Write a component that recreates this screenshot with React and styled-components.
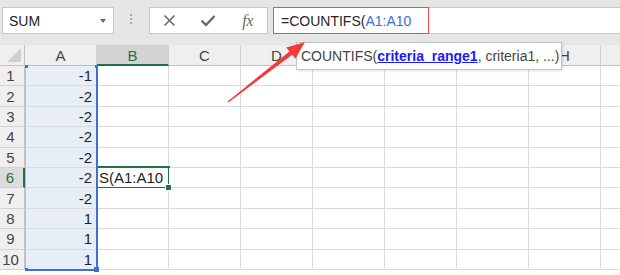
import React from 'react';
import styled, { createGlobalStyle } from 'styled-components';

const Global = createGlobalStyle`
  html, body { margin: 0; padding: 0; background: #fff; }
  body { font-family: "Liberation Sans", Arial, sans-serif; overflow: hidden; }
`;

const Page = styled.div`
  width: 620px;
  height: 275px;
  overflow: hidden;
  position: relative;
  background: #fff;
`;

const Toolbar = styled.div`
  height: 45px;
  box-sizing: border-box;
  background: #e6e6e6;
  display: flex;
  align-items: flex-start;
  padding-top: 7px;
`;

const NameBox = styled.div`
  margin-left: 2px;
  width: 112px;
  height: 27px;
  box-sizing: border-box;
  background: #fff;
  border: 1px solid #c6c6c6;
  display: flex;
  align-items: center;
  justify-content: space-between;
  padding: 0 7px 0 6px;
  font-size: 14px;
  color: #222;
`;

const Caret = styled.span`
  width: 0;
  height: 0;
  border-left: 3.5px solid transparent;
  border-right: 3.5px solid transparent;
  border-top: 4px solid #6a6a6a;
`;

const Grip = styled.div`
  width: 2px;
  margin: 7px 17px 0 16px;
  display: flex;
  flex-direction: column;
  gap: 2px;
`;

const GripDot = styled.span`
  width: 2px;
  height: 2px;
  background: #a8a8a8;
`;

const FnBox = styled.div`
  width: 119px;
  height: 27px;
  box-sizing: border-box;
  background: #fff;
  border: 1px solid #c6c6c6;
  display: grid;
  grid-template-columns: 38px 40px 39px;
  align-items: center;
  justify-items: center;
`;

const FxText = styled.span`
  font-family: "Liberation Serif", "Times New Roman", serif;
  font-style: italic;
  font-size: 16px;
  color: #6a6a6a;
  letter-spacing: -0.5px;
`;

const FormulaBar = styled.div`
  position: relative;
  flex: 1;
  margin-left: 5px;
  height: 27px;
  box-sizing: border-box;
  background: #fff;
  border: 1px solid #c6c6c6;
  border-right: none;
  display: flex;
  align-items: center;
  padding-left: 7px;
  font-size: 14px;
  color: #262626;
`;

const RefText = styled.span`
  color: ${p => p.$color};
`;

const RedBox = styled.div`
  position: absolute;
  left: -1px;
  top: -1px;
  width: 156px;
  height: 27px;
  box-sizing: border-box;
  border: 1.5px solid #ff4545;
`;

const Sheet = styled.div`
  position: relative;
  display: grid;
  grid-template-columns: 25px repeat(9, 72px);
  grid-template-rows: 21px repeat(10, 20.4px);
`;

const Cell = styled.div`
  position: relative;
  box-sizing: border-box;
  display: flex;
  align-items: center;
  white-space: nowrap;
  overflow: visible;
  font-size: 15px;
  color: #1e1e1e;
  background: ${p => (p.$sel ? '#e8eef8' : '#fff')};
  border-right: 1px solid #dadada;
  border-bottom: 1px solid #dadada;
  justify-content: ${p => (p.$right ? 'flex-end' : 'flex-start')};
  padding: ${p => (p.$right ? '0 4px 0 0' : '0 0 0 2px')};
  ${p =>
    p.$active &&
    `
    &::after {
      content: '';
      position: absolute;
      left: -1px; top: -2px; right: -2px; bottom: -2px;
      border: 2px solid #217346;
    }
    &::before {
      content: '';
      position: absolute;
      right: -4px; bottom: -4px;
      width: 5px; height: 5px;
      background: #217346;
      border: 1px solid #fff;
      z-index: 2;
    }
  `}
`;

const ColHead = styled.div`
  position: relative;
  box-sizing: border-box;
  display: flex;
  align-items: center;
  justify-content: center;
  font-size: 15px;
  padding-top: 1px;
  color: ${p => (p.$on ? '#217346' : '#444')};
  background: ${p => (p.$on ? '#d3d3d3' : '#efefef')};
  border-right: 1px solid #d0d0d0;
  border-bottom: ${p => (p.$on ? '2px solid #217346' : '1px solid #c3c3c3')};
`;

const RowHead = styled.div`
  box-sizing: border-box;
  display: flex;
  align-items: center;
  justify-content: center;
  padding-right: 3px;
  font-size: 15px;
  color: ${p => (p.$on ? '#217346' : '#444')};
  background: ${p => (p.$on ? '#dcdcdc' : '#efefef')};
  border-right: ${p => (p.$on ? '2px solid #217346' : '1px solid #c3c3c3')};
  border-bottom: 1px solid #d3d3d3;
`;

const Corner = styled.div`
  position: relative;
  box-sizing: border-box;
  background: #efefef;
  border-right: 1px solid #c3c3c3;
  border-bottom: 1px solid #c3c3c3;
  &::after {
    content: '';
    position: absolute;
    right: 3px;
    bottom: 3px;
    width: 0;
    height: 0;
    border-left: 14px solid transparent;
    border-bottom: 14px solid #cfcfcf;
  }
`;

const RangeBox = styled.div`
  position: absolute;
  left: 25px;
  top: 20px;
  width: 73px;
  height: 206px;
  box-sizing: border-box;
  border-left: 1px solid #a9bfe4;
  border-top: 1px solid #a9bfe4;
  border-right: 2px solid #3f72cf;
  border-bottom: 2px solid #3f72cf;
  pointer-events: none;
`;

const Handle = styled.span`
  position: absolute;
  width: ${p => p.$s}px;
  height: ${p => p.$s}px;
  background: #3f72cf;
  ${p => p.$pos}
`;

const Tooltip = styled.div`
  position: absolute;
  left: 296px;
  top: 42px;
  width: 266px;
  height: 28px;
  box-sizing: border-box;
  background: #fff;
  border: 1px solid #c4c4c4;
  box-shadow: 1px 1px 2px rgba(0, 0, 0, 0.12);
  display: flex;
  align-items: center;
  padding-left: 4px;
  font-size: 14px;
  color: #444;
  white-space: nowrap;
`;

const ArgLink = styled.span`
  color: #1a1aff;
  font-weight: bold;
  text-decoration: underline;
`;

const Arrow = styled.svg`
  position: absolute;
  left: 0;
  top: 0;
  pointer-events: none;
`;

const values = ['-1', '-2', '-2', '-2', '-2', '-2', '-2', '1', '1', '1'];
const cols = ['A', 'B', 'C', 'D', 'E', 'F', 'G', 'H', 'I'];

export default function App() {
  return (
    <Page>
      <Global />
      <Toolbar>
        <NameBox>
          SUM
          <Caret />
        </NameBox>
        <Grip>
          <GripDot />
          <GripDot />
          <GripDot />
        </Grip>
        <FnBox>
          <svg width="13" height="13" viewBox="0 0 13 13">
            <path d="M1.5 1.5 L11.5 11.5 M11.5 1.5 L1.5 11.5" stroke="#6a6a6a" strokeWidth="1.6" fill="none" />
          </svg>
          <svg width="16" height="13" viewBox="0 0 16 13">
            <path d="M1.5 6.5 L6 11 L14.5 2" stroke="#6a6a6a" strokeWidth="2.4" fill="none" />
          </svg>
          <FxText>fx</FxText>
        </FnBox>
        <FormulaBar>
          =COUNTIFS(<RefText $color="#3b6fd4">A1:A10</RefText>
          <RedBox />
        </FormulaBar>
      </Toolbar>
      <Sheet>
        <Corner />
        {cols.map(c => (
          <ColHead key={c} $on={c === 'B'}>
            {c}
          </ColHead>
        ))}
        {values.map((v, i) => (
          <React.Fragment key={i}>
            <RowHead $on={i === 5}>{i + 1}</RowHead>
            {cols.map((c, j) => (
              <Cell key={c} $sel={j === 0} $right={j === 0} $active={j === 1 && i === 5}>
                {j === 0 ? v : j === 1 && i === 5 ? 'S(A1:A10' : ''}
              </Cell>
            ))}
          </React.Fragment>
        ))}
        <RangeBox>
          <Handle $s={3} $pos="left:-1px; top:-1px;" />
          <Handle $s={3} $pos="right:-2px; top:-1px;" />
          <Handle $s={3} $pos="left:-1px; bottom:-2px;" />
          <Handle $s={5} $pos="right:-3px; bottom:-3px;" />
        </RangeBox>
      </Sheet>
      <Tooltip>
        COUNTIFS(<ArgLink>criteria_range1</ArgLink>, criteria1, ...)
      </Tooltip>
      <Arrow width="620" height="275" viewBox="0 0 620 275">
        <polygon
          points="227.6,101.5 289.4,51.4 286.3,47.4 305,42 295.3,58.8 292.2,54.8 228.4,102.5"
          fill="#f23a3a"
        />
      </Arrow>
    </Page>
  );
}
